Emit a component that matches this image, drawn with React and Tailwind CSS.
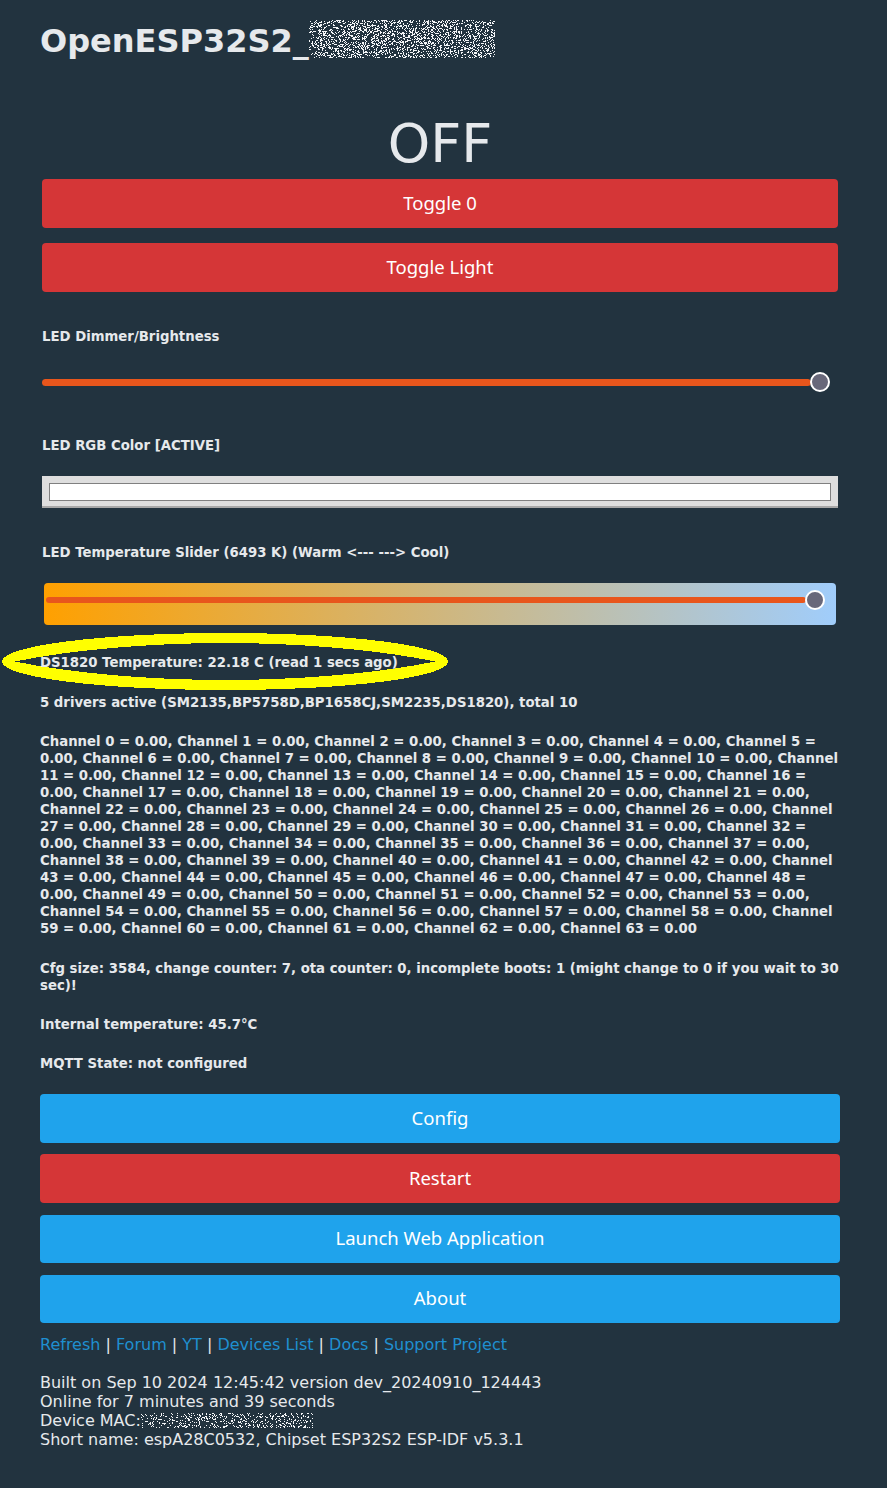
import React from "react";

const channels = Array.from({ length: 64 }, (_, i) => `Channel ${i} = 0.00`).join(", ");

// redacted bits of the screenshot are a speckle of white pixels
function Speckle({ width, height, density, className }) {
  const dots = [];
  let seed = width * 7 + height;
  for (let y = 0; y < height; y++) {
    for (let x = 0; x < width; x++) {
      seed = (seed * 1103515245 + 12345) & 0x7fffffff;
      if ((seed >> 8) % 100 < density) dots.push(`M${x} ${y}h1v1h-1z`);
    }
  }
  return (
    <svg width={width} height={height} className={className}>
      <path d={dots.join("")} fill="#f4f6f8" />
    </svg>
  );
}

function Button({ color, className, children }) {
  return (
    <div className={`flex items-center justify-center rounded pb-[2px] font-['Noto_Sans',sans-serif] text-[18.5px] text-white ${color} ${className}`}>
      {children}
    </div>
  );
}

function Slider({ className, track }) {
  return (
    <div className={`flex items-center ${className}`}>
      <div className={`flex-1 rounded-full bg-[#e8561c] ${track}`} />
      <div className="-ml-px h-5 w-5 shrink-0 rounded-full border-2 border-white bg-[#68687a]" />
    </div>
  );
}

export default function App() {
  return (
    <div className="h-[1488px] overflow-hidden bg-[#22333f] pl-10 pr-[47px] font-['DejaVu_Sans',sans-serif] text-[#e6e9ec]">
      <div className="flex h-[82px] items-start pt-[21px]">
        <h1 className="text-[32px] leading-[40px] font-bold">OpenESP32S2_</h1>
        <Speckle width={186} height={38} density={30} className="-mt-px" />
      </div>

      <div className="mt-[30px] text-center text-[54px] leading-[64px]">OFF</div>

      <div className="ml-[2px] mr-[2px] mt-[3px]">
        <Button color="bg-[#d53637]" className="h-[49px]">Toggle 0</Button>
        <Button color="bg-[#d53637]" className="mt-[15px] h-[49px]">Toggle Light</Button>

        <div className="mt-[36px] text-[13.28px] leading-[17px] font-bold">LED Dimmer/Brightness</div>
        <Slider className="mt-[27px] h-5 pr-2" track="h-[7px]" />

        <div className="mt-[45px] text-[13.28px] leading-[17px] font-bold">LED RGB Color [ACTIVE]</div>
        <div className="mt-[22px] flex h-[32px] border-b-2 border-b-[#a8a8a8] bg-[#dedede] px-[7px] pt-[7px] pb-[5px]">
          <div className="flex-1 border border-[#808080] bg-white" />
        </div>

        <div className="mt-[36px] text-[13.28px] leading-[17px] font-bold">LED Temperature Slider (6493 K) (Warm &lt;--- ---&gt; Cool)</div>
        <div className="mx-[2px] mt-[22px] h-[42px] rounded bg-[linear-gradient(to_right,#ffa000,#a0cdfb)] pt-[7px] pl-[2px] pr-[11px]">
          <Slider className="h-5" track="h-[6px]" />
        </div>
      </div>

      <div className="relative mt-[29px] text-[13.28px] leading-[17px] font-bold">
        <svg width="448" height="60" className="absolute -left-[40px] -top-[23px]" shapeRendering="crispEdges">
          <path
            fillRule="evenodd"
            fill="#ffff00"
            d="M2 30.5a223 28.5 0 1 0 446 0a223 28.5 0 1 0 -446 0zM15 30.5C70 19 150 12 225 12S380 19 435 30.5C380 42 300 49 225 49S70 42 15 30.5z"
          />
        </svg>
        <p className="relative">DS1820 Temperature: 22.18 C (read 1 secs ago)</p>
      </div>

      <div className="text-[13.28px] leading-[17px] font-bold">
        <p className="mt-[23px]">5 drivers active (SM2135,BP5758D,BP1658CJ,SM2235,DS1820), total 10</p>
        <p className="mt-[22px]">{channels}</p>
        <p className="mt-[23px]">Cfg size: 3584, change counter: 7, ota counter: 0, incomplete boots: 1 (might change to 0 if you wait to 30 sec)!</p>
        <p className="mt-[22px]">Internal temperature: 45.7°C</p>
        <p className="mt-[22px]">MQTT State: not configured</p>
      </div>

      <Button color="bg-[#1fa3ec]" className="mt-[22px] h-[49px]">Config</Button>
      <Button color="bg-[#d53637]" className="mt-[11px] h-[49px]">Restart</Button>
      <Button color="bg-[#1fa3ec]" className="mt-[12px] h-[48px]">Launch Web Application</Button>
      <Button color="bg-[#1fa3ec]" className="mt-[12px] h-[48px]">About</Button>

      <div className="mt-[12px] text-[16px] leading-[19px]">
        <a className="text-[#1f8fd0]">Refresh</a> | <a className="text-[#1f8fd0]">Forum</a> | <a className="text-[#1f8fd0]">YT</a> | <a className="text-[#1f8fd0]">Devices List</a> | <a className="text-[#1f8fd0]">Docs</a> | <a className="text-[#1f8fd0]">Support Project</a>
      </div>

      <div className="mt-[19px] text-[16px] leading-[19px]">
        <div>Built on Sep 10 2024 12:45:42 version dev_20240910_124443</div>
        <div>Online for 7 minutes and 39 seconds</div>
        <div className="flex items-center">
          Device MAC:
          <Speckle width={172} height={15} density={20} />
        </div>
        <div>Short name: espA28C0532, Chipset ESP32S2 ESP-IDF v5.3.1</div>
      </div>
    </div>
  );
}
